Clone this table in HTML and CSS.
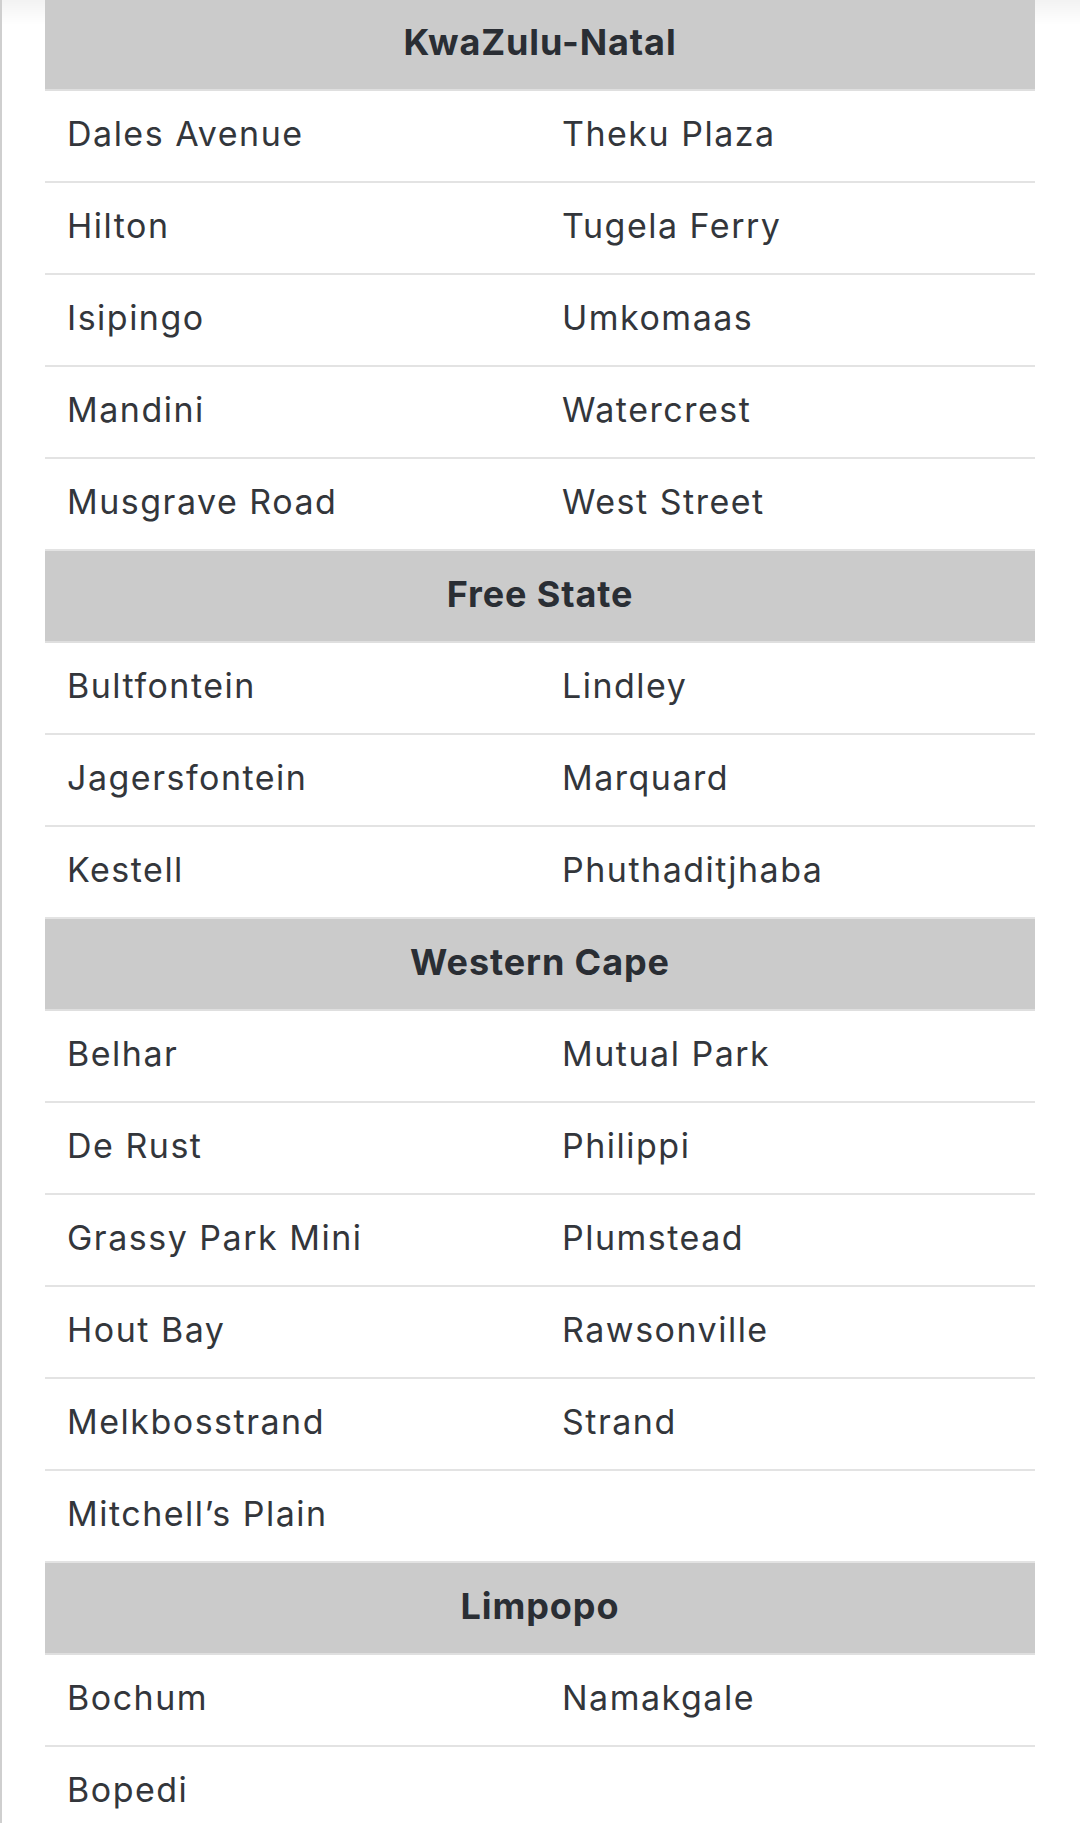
FILE: index.html
```html
<!DOCTYPE html>
<html lang="en">
<head>
<meta charset="utf-8">
<title>Branches</title>
<link rel="stylesheet" href="styles.css">
</head>
<body>
<div class="page">
  <div class="list">
    <div class="region first">KwaZulu-Natal</div>
    <div class="row"><div class="cell">Dales Avenue</div><div class="cell">Theku Plaza</div></div>
    <div class="row"><div class="cell">Hilton</div><div class="cell">Tugela Ferry</div></div>
    <div class="row"><div class="cell">Isipingo</div><div class="cell">Umkomaas</div></div>
    <div class="row"><div class="cell">Mandini</div><div class="cell">Watercrest</div></div>
    <div class="row"><div class="cell">Musgrave Road</div><div class="cell">West Street</div></div>

    <div class="region">Free State</div>
    <div class="row"><div class="cell">Bultfontein</div><div class="cell">Lindley</div></div>
    <div class="row"><div class="cell">Jagersfontein</div><div class="cell">Marquard</div></div>
    <div class="row"><div class="cell">Kestell</div><div class="cell">Phuthaditjhaba</div></div>

    <div class="region">Western Cape</div>
    <div class="row"><div class="cell">Belhar</div><div class="cell">Mutual Park</div></div>
    <div class="row"><div class="cell">De Rust</div><div class="cell">Philippi</div></div>
    <div class="row"><div class="cell">Grassy Park Mini</div><div class="cell">Plumstead</div></div>
    <div class="row"><div class="cell">Hout Bay</div><div class="cell">Rawsonville</div></div>
    <div class="row"><div class="cell">Melkbosstrand</div><div class="cell">Strand</div></div>
    <div class="row"><div class="cell">Mitchell’s Plain</div><div class="cell"></div></div>

    <div class="region">Limpopo</div>
    <div class="row"><div class="cell">Bochum</div><div class="cell">Namakgale</div></div>
    <div class="row"><div class="cell">Bopedi</div><div class="cell"></div></div>
  </div>
</div>
</body>
</html>
```

FILE: styles.css
```css
html, body {
  margin: 0;
  padding: 0;
  background: #ffffff;
}

body {
  font-family: "Inter", "Open Sans", "DejaVu Sans", sans-serif;
  color: #33363b;
  overflow: hidden;
}

.page {
  min-height: 1823px;
  border-left: 2px solid #cfcfcf;
  background: linear-gradient(to bottom, rgba(0, 0, 0, 0.05), rgba(0, 0, 0, 0) 26px) no-repeat;
}

.list {
  margin-left: 43px;
  width: 990px;
}

.region {
  height: 92px;
  background: #cbcbcb;
  border-bottom: 2px solid #dfdfdf;
  display: flex;
  align-items: center;
  justify-content: center;
  font-size: 36px;
  font-weight: 700;
  letter-spacing: 0.9px;
  color: #2a2e34;
  padding-bottom: 4px;
  box-sizing: border-box;
}

.region.first {
  margin-top: -1px;
}

.row {
  height: 92px;
  box-sizing: border-box;
  display: grid;
  grid-template-columns: 1fr 1fr;
  align-items: center;
  border-bottom: 2px solid #e3e3e3;
}

.cell {
  padding-left: 22px;
  font-size: 34px;
  letter-spacing: 1.5px;
  padding-bottom: 5px;
}
```
